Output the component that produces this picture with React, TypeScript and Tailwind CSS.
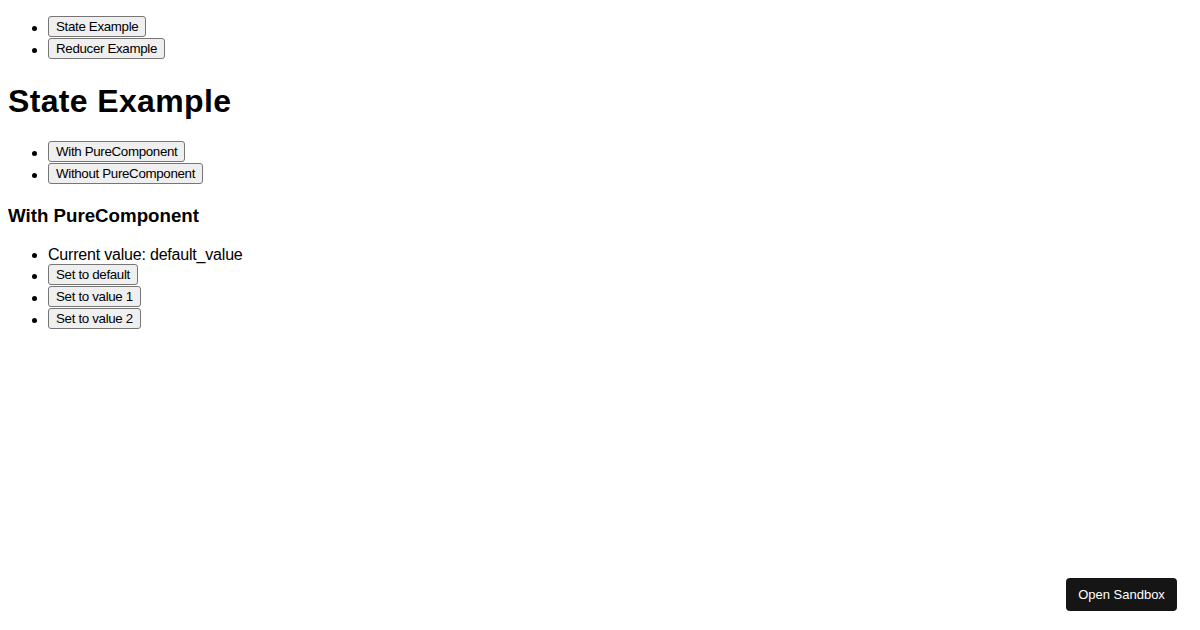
import React from "react";

const Btn = ({ children }: { children: React.ReactNode }) => (
  <button className="h-[21px] px-[7px] text-[13.333px] leading-[15px] tracking-[-0.33px] text-black bg-[#efefef] border border-[#767676] rounded-[3px] align-top">
    {children}
  </button>
);

export default function App() {
  return (
    <div className="min-h-[630px] bg-white text-black font-['Liberation_Sans',Arial,sans-serif] px-2">
      <ul className="list-disc pl-10 mt-4">
        <li className="h-[22px]"><Btn>State Example</Btn></li>
        <li className="h-[22px]"><Btn>Reducer Example</Btn></li>
      </ul>
      <h1 className="text-[32px] font-bold leading-[38px] tracking-[0.35px] mt-[22px] mb-[21px]">State Example</h1>
      <ul className="list-disc pl-10">
        <li className="h-[22px]"><Btn>With PureComponent</Btn></li>
        <li className="h-[22px]"><Btn>Without PureComponent</Btn></li>
      </ul>
      <h3 className="text-[18.72px] font-bold leading-[22px] mt-[20px] mb-[18px]">With PureComponent</h3>
      <ul className="list-disc pl-10 text-base">
        <li className="leading-[19px] tracking-[-0.2px]">Current value: default_value</li>
        <li className="h-[22px]"><Btn>Set to default</Btn></li>
        <li className="h-[22px]"><Btn>Set to value 1</Btn></li>
        <li className="h-[22px]"><Btn>Set to value 2</Btn></li>
      </ul>
      <button className="fixed right-[23px] bottom-[19px] h-[33px] w-[111px] rounded-[4px] bg-[#151515] text-white text-[13px] font-['Liberation_Sans',Arial,sans-serif]">
        Open Sandbox
      </button>
    </div>
  );
}
